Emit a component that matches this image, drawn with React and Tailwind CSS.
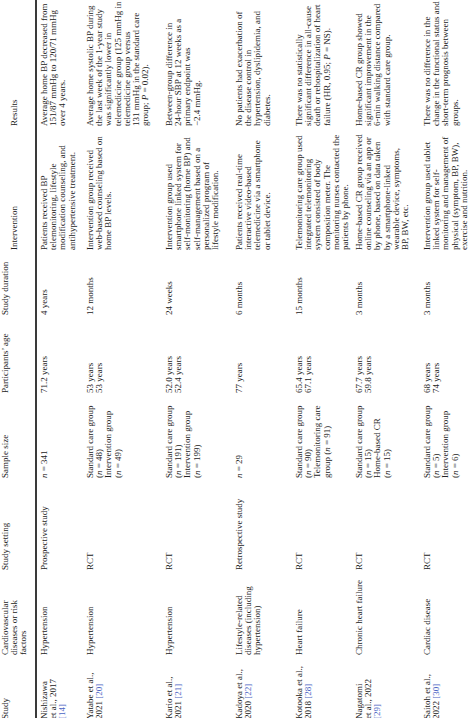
import React from "react";

const headers = [
  ["Study"],
  ["Cardiovascular", "diseases or risk", "factors"],
  ["Study setting"],
  ["Sample size"],
  ["Participants\u2019 age"],
  ["Study duration"],
  ["", "Intervention"],
  ["", "Results"],
];

const rows = [
  {
    h: "h-[46px]",
    cells: [
      ["Nishizawa", "et al., 2017", "[14]"],
      ["Hypertension"],
      ["Prospective study"],
      ["n = 341"],
      ["71.2 years"],
      ["4 years"],
      ["Patients received BP", "telemonitoring, lifestyle", "modification counseling, and", "antihypertensive treatment."],
      ["Average home BP decreased from", "151/87 mmHg to 120/71 mmHg", "over 4 years."],
    ],
  },
  {
    h: "h-[79px]",
    cells: [
      ["Yatabe et al.,", "2021 [20]"],
      ["Hypertension"],
      ["RCT"],
      ["Standard care group", "(n = 48)", "Intervention group", "(n = 49)"],
      ["53 years", "53 years"],
      ["12 months"],
      ["Intervention group received", "web-based counseling based on", "home BP levels."],
      [
        "Average home systolic BP during",
        "the last week of the 1-year study",
        "was significantly lower in",
        "telemedicine group (125 mmHg in",
        "telemedicine group versus",
        "131 mmHg in the standard care",
        "group; P = 0.02).",
      ],
    ],
  },
  {
    h: "h-[70px]",
    cells: [
      ["Kario et al.,", "2021 [21]"],
      ["Hypertension"],
      ["RCT"],
      ["Standard care group", "(n = 191)", "Intervention group", "(n = 199)"],
      ["52.0 years", "52.4 years"],
      ["24 weeks"],
      [
        "Intervention group used",
        "smartphone linked system for",
        "self-monitoring (home BP) and",
        "self-management based on a",
        "personalized program of",
        "lifestyle modification.",
      ],
      ["Between-group difference in", "24-hour SBP at 12 weeks as a", "primary endpoint was", "\u22122.4 mmHg."],
    ],
  },
  {
    h: "h-[60px]",
    cells: [
      ["Kadoya et al.,", "2020 [22]"],
      ["Lifestyle-related", "diseases (including", "hypertension)"],
      ["Retrospective study"],
      ["n = 29"],
      ["77 years"],
      ["6 months"],
      ["Patients received real-time", "interactive video-based", "telemedicine via a smartphone", "or tablet device."],
      ["No patients had exacerbation of", "the disease control in", "hypertension, dyslipidemia, and", "diabetes."],
    ],
  },
  {
    h: "h-[60px]",
    cells: [
      ["Kotooka et al.,", "2018 [28]"],
      ["Heart failure"],
      ["RCT"],
      ["Standard care group", "(n = 90)", "Telemonitoring care", "group (n = 91)"],
      ["65.4 years", "67.1 years"],
      ["15 months"],
      [
        "Telemonitoring care group used",
        "integrated telemonitoring",
        "system consisted of body",
        "composition meter. The",
        "monitoring nurses contacted the",
        "patients by phone.",
      ],
      ["There was no statistically", "significant difference in all-cause", "death or rehospitalization of heart", "failure (HR, 0.95; P = NS)."],
    ],
  },
  {
    h: "h-[68px]",
    cells: [
      ["Nagatomi", "et al., 2022", "[29]"],
      ["Chronic heart failure"],
      ["RCT"],
      ["Standard care group", "(n = 15)", "Home-based CR", "(n = 15)"],
      ["67.7 years", "59.8 years"],
      ["3 months"],
      [
        "Home-based CR group received",
        "online counseling via an app or",
        "by phone, based on data taken",
        "by a smartphone-linked",
        "wearable device, symptoms,",
        "BP, BW, etc.",
      ],
      ["Home-based CR group showed", "significant improvement in the", "6-min walking distance compared", "with standard care group."],
    ],
  },
  {
    h: "h-[51px]",
    cells: [
      ["Saitoh et al.,", "2022 [30]"],
      ["Cardiac disease"],
      ["RCT"],
      ["Standard care group", "(n = 5)", "Intervention group", "(n = 6)"],
      ["68 years", "74 years"],
      ["3 months"],
      [
        "Intervention group used tablet",
        "linked system for self-",
        "monitoring and management of",
        "physical (symptom, BP, BW),",
        "exercise and nutrition.",
      ],
      ["There was no difference in the", "change in the functional status and", "short-term prognosis between", "groups."],
    ],
  },
];

// italic n / P and blue reference links
const fmt = (line) =>
  line.split(/(\[\d+\]|\b[nP](?= = ))/).map((part, i) => {
    if (/^\[\d+\]$/.test(part)) return <span key={i} className="text-[#4a63c4]">{part}</span>;
    if (part === "n" || part === "P") return <i key={i}>{part}</i>;
    return <React.Fragment key={i}>{part}</React.Fragment>;
  });

const cols = "grid grid-cols-[64px_85px_92px_85px_78px_65px_124px_1fr] -ml-px";

const Cell = ({ lines }) => (
  <div className="flex flex-col whitespace-nowrap">
    {lines.map((l, i) => (
      <span key={i} className="h-[9.2px]">
        {fmt(l)}
      </span>
    ))}
  </div>
);

export default function App() {
  return (
    <div className="w-[474px] h-[718px] overflow-hidden bg-white">
      <div
        className="w-[718px] h-[474px] origin-top-left -rotate-90 translate-y-[718px] bg-white text-[#222] text-[9px] leading-[9.2px]"
        style={{ fontFamily: '"Liberation Serif", "Times New Roman", serif' }}
      >
        <div className={`${cols} h-[35px] pt-px`}>
          {headers.map((h, i) => (
            <Cell key={i} lines={h} />
          ))}
        </div>
        <div className="h-[2px] bg-[#3a3a3a]" />
        <div className="h-[3px]" />
        {rows.map((r, i) => (
          <div key={i} className={`${cols} ${r.h}`}>
            {r.cells.map((c, j) => (
              <Cell key={j} lines={c} />
            ))}
          </div>
        ))}
      </div>
    </div>
  );
}
